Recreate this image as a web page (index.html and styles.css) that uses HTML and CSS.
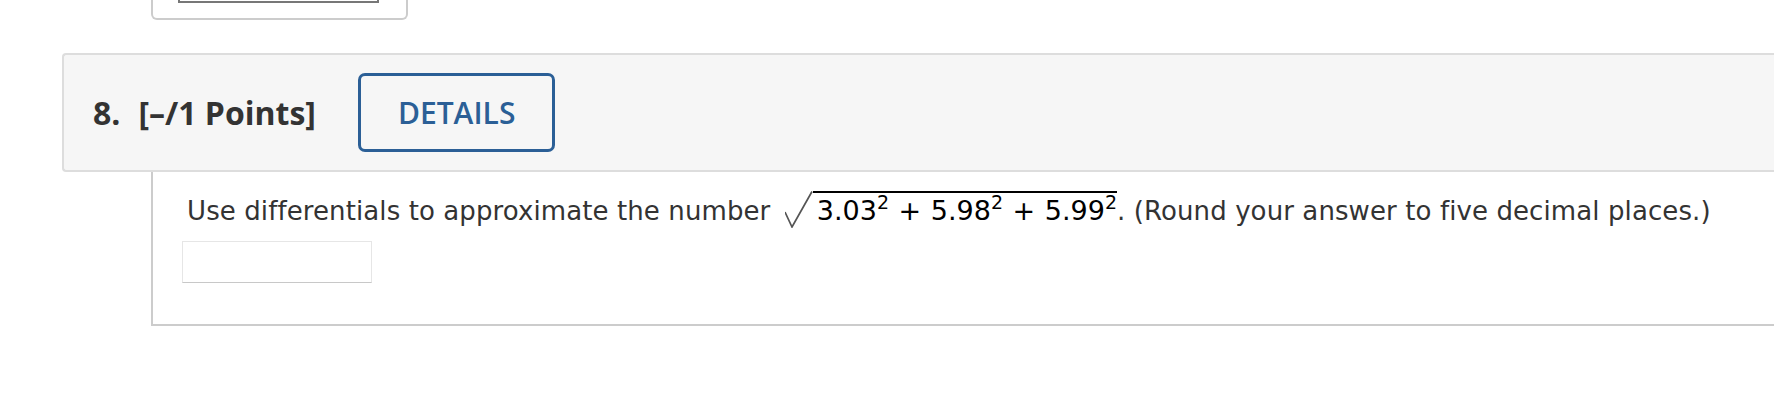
FILE: index.html
```html
<!DOCTYPE html>
<html lang="en">
<head>
    <meta charset="UTF-8">
    <meta name="viewport" content="width=device-width, initial-scale=1.0">
    <title>Question 8</title>
    <link rel="stylesheet" href="styles.css">
</head>
<body>
    <div class="prev-card">
        <div class="prev-field"></div>
    </div>

    <div class="question">
        <div class="q-header">
            <span class="q-num">8.</span>
            <span class="q-points">[–/1 Points]</span>
            <button class="details-btn">DETAILS</button>
        </div>

        <div class="q-body">
            <p class="q-text">Use differentials to approximate the number <span class="math"><svg class="radical" width="28" height="38" viewBox="0 0 28 38"><polyline points="0,22 7,37 27,1.5" fill="none" stroke="#555" stroke-width="1.7"/></svg><span class="radicand">3.03<sup>2</sup> <span class="op">+</span> 5.98<sup>2</sup> <span class="op">+</span> 5.99<sup>2</sup></span></span>. (Round your answer to five decimal places.)</p>
            <input class="answer" type="text">
        </div>
    </div>
</body>
</html>
```

FILE: styles.css
```css
* {
    margin: 0;
    padding: 0;
    box-sizing: border-box;
}

body {
    font-family: 'DejaVu Sans', Verdana, sans-serif;
    color: #333;
    background: #fff;
    overflow: hidden;
}

/* bottom of the previous question's card */
.prev-card {
    margin-left: 151px;
    width: 257px;
    height: 20px;
    border: 2px solid #ccc;
    border-top: none;
    border-radius: 0 0 6px 6px;
}

.prev-field {
    margin-left: 25px;
    width: 201px;
    height: 3px;
    border: 2px solid #777;
    border-top: none;
}

.question {
    margin: 33px -20px 0 62px;
}

.q-header {
    display: flex;
    align-items: center;
    padding: 18px 0 18px 29px;
    background: #f6f6f6;
    border: 2px solid #ddd;
    border-right: none;
    border-radius: 4px 0 0 4px;
    font-family: 'Open Sans', sans-serif;
}

.q-num,
.q-points {
    font-size: 32px;
    font-weight: 700;
    color: #333;
}

.q-num {
    margin-right: 18px;
}

.q-points {
    margin-right: 42px;
}

.details-btn {
    height: 79px;
    padding: 0 37px;
    background: transparent;
    border: 3px solid #2b5f96;
    border-radius: 7px;
    color: #2b5f96;
    font-family: 'Open Sans', sans-serif;
    font-size: 30px;
    font-weight: 600;
    cursor: pointer;
}

.q-body {
    margin-left: 89px;
    padding: 18px 0 41px 34px;
    border-left: 2px solid #ccc;
    border-bottom: 2px solid #ccc;
}

.q-text {
    font-size: 26px;
    line-height: 30px;
    letter-spacing: 0.1px;
}

.math {
    color: #000;
    white-space: nowrap;
    letter-spacing: 0;
}

.radical {
    margin-left: 6px;
    vertical-align: -8px;
}

.radicand {
    padding: 2px 0 0 4px;
    border-top: 2px solid #000;
    font-size: 27px;
}

.radicand sup {
    font-size: 19px;
    line-height: 0;
    vertical-align: 11px;
}

.op {
    margin: 0 1px;
}

.answer {
    display: block;
    margin-top: 13px;
    margin-left: -5px;
    width: 190px;
    height: 42px;
    border: 1px solid #e6e6e6;
    border-bottom-color: #c8c8c8;
    background: #fff;
}
```
